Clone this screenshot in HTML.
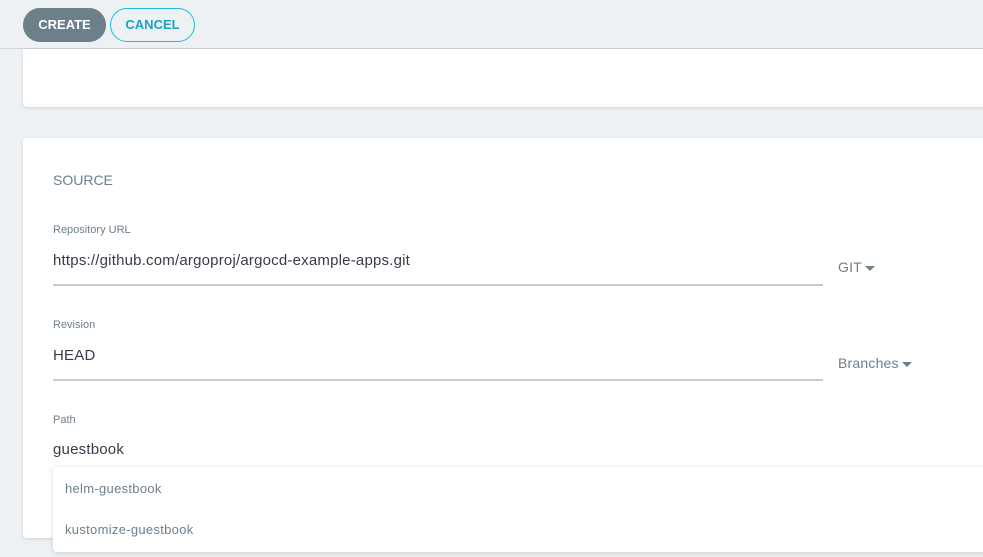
<!DOCTYPE html>
<html><head><style>
*{margin:0;padding:0;box-sizing:border-box}
body{width:983px;height:557px;overflow:hidden;background:#eef1f4;font-family:"Liberation Sans",sans-serif;position:relative}
.a{position:absolute;white-space:nowrap}
.top{left:0;top:0;width:983px;height:49px;background:#eef1f4;border-bottom:1px solid #ccd6dd}
.btn{top:8px;height:34px;border-radius:17px;font-size:13px;font-weight:bold;line-height:32px;text-align:center}
.card{background:#fff;border-radius:4px;box-shadow:0 1px 3px rgba(0,0,0,.12)}
.lbl{font-size:11px;color:#6d7f8b}
.val{font-size:15px;color:#363c4a;letter-spacing:0.2px}
.line{height:2px;background:#c8ccd0;left:53px;width:770px}
.dd{font-size:14px;color:#6d7f8b;letter-spacing:0.2px}
.tri{display:inline-block;border-left:5px solid transparent;border-right:5px solid transparent;border-top:5px solid #6d7f8b;vertical-align:middle;margin-left:3px}
</style></head><body>
<div class="a top"></div>
<div class="a btn" style="left:23px;width:83px;background:#6d7f8b;color:#fff;border:1px solid #6d7f8b">CREATE</div>
<div class="a btn" style="left:110px;width:85px;color:#19a3c0;border:1px solid #19bfd6;background:transparent">CANCEL</div>
<div class="a card" style="left:23px;top:49px;width:980px;height:58px;border-top-left-radius:0;border-top-right-radius:0"></div>
<div class="a card" style="left:23px;top:138px;width:980px;height:400px"></div>
<div class="a" style="left:53px;top:172px;font-size:14px;color:#6d7f8b">SOURCE</div>
<div class="a lbl" style="left:53px;top:224px">Repository URL</div>
<div class="a val" style="left:53px;top:252px">https://github.com/argoproj/argocd-example-apps.git</div>
<div class="a line" style="top:284px"></div>
<div class="a dd" style="left:838px;top:259px">GIT<span class="tri"></span></div>
<div class="a lbl" style="left:53px;top:319px">Revision</div>
<div class="a val" style="left:53px;top:347px">HEAD</div>
<div class="a line" style="top:379px"></div>
<div class="a dd" style="left:838px;top:355px">Branches<span class="tri"></span></div>
<div class="a lbl" style="left:53px;top:414px">Path</div>
<div class="a val" style="left:53px;top:441px">guestbook</div>
<div class="a" style="left:53px;top:467px;width:940px;height:85px;background:#fff;border-radius:4px;box-shadow:0 1px 6px rgba(0,0,0,.15)"></div>
<div class="a" style="left:65px;top:481px;font-size:13px;color:#6d7f8b;letter-spacing:0.3px">helm-guestbook</div>
<div class="a" style="left:65px;top:522px;font-size:13px;color:#6d7f8b;letter-spacing:0.3px">kustomize-guestbook</div>
</body></html>
